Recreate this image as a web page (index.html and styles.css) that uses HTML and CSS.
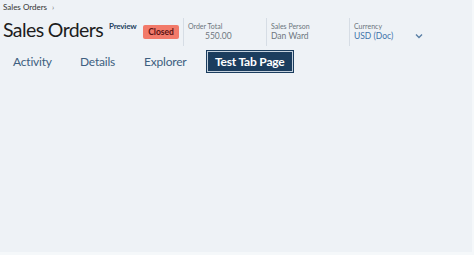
FILE: index.html
```html
<!DOCTYPE html>
<html>
<head>
<meta charset="utf-8">
<link rel="stylesheet" href="styles.css">
</head>
<body>
<div class="page">
  <div class="crumbs">Sales Orders <span class="sep">›</span></div>
  <div class="header">
    <h1 class="title">Sales Orders</h1>
    <span class="preview">Preview</span>
    <span class="badge">Closed</span>
    <div class="field">
      <div class="label">Order Total</div>
      <div class="value num">550.00</div>
    </div>
    <div class="field">
      <div class="label">Sales Person</div>
      <div class="value">Dan Ward</div>
    </div>
    <div class="field last">
      <div class="label">Currency</div>
      <div class="value link">USD (Doc)</div>
    </div>
    <svg class="chev" width="8" height="6" viewBox="0 0 8 6"><path d="M1 1.5 L4 4.5 L7 1.5" fill="none" stroke="#5a7fa5" stroke-width="1.4"/></svg>
  </div>
  <div class="tabs">
    <span class="tab t1">Activity</span>
    <span class="tab t2">Details</span>
    <span class="tab t3">Explorer</span>
    <span class="tab active">Test Tab Page</span>
  </div>
</div>
</body>
</html>
```
FILE: styles.css
```css
html, body { margin: 0; padding: 0; }
body {
  background: #f5f8fa;
  font-family: "Lato", "Noto Sans", sans-serif;
  width: 474px;
  height: 255px;
  overflow: hidden;
}
.page {
  width: 472px;
  height: 252px;
  background: #eef2f6;
  box-sizing: border-box;
  padding: 1px 0 0 3px;
}
.crumbs {
  font-size: 8px;
  color: #333;
  height: 12px;
  line-height: 12px;
}
.sep { margin-left: 3px; color: #777; }
.header {
  display: flex;
  align-items: flex-start;
  height: 30px;
  margin-top: 4px;
}
.title {
  margin: 0;
  width: 106px;
  flex: none;
  font-weight: 400;
  font-size: 19.5px;
  letter-spacing: -0.6px;
  line-height: 26px;
  color: #1d1d1d;
  white-space: nowrap;
}
.preview {
  width: 34px;
  flex: none;
  font-size: 8px;
  font-weight: 700;
  letter-spacing: -0.2px;
  color: #23425f;
  margin-top: 4px;
}
.badge {
  flex: none;
  width: 36px;
  box-sizing: border-box;
  text-align: center;
  margin-top: 8px;
  background: #f27a6a;
  color: #5b1212;
  font-size: 8.5px;
  font-weight: 700;
  padding: 2px 0;
  border-radius: 2px;
  line-height: 10px;
}
.field {
  flex: none;
  margin-left: 4px;
  border-left: 1px solid #d6dde5;
  padding-left: 4px;
  width: 74px;
  height: 28px;
  margin-top: 1px;
}
.label { font-size: 7px; color: #6b747c; line-height: 10px; margin-top: 3px; }
.value { font-size: 8.5px; color: #6e777f; line-height: 11px; }
.num { padding-left: 17px; }
.link { color: #3e74ab; }
.chev { margin: 16px 0 0 -13px; }
.tabs {
  display: flex;
  align-items: center;
  margin-top: 2px;
  height: 24px;
}
.tab {
  font-size: 12px;
  letter-spacing: -0.2px;
  color: #3d5f80;
}
.t1 { margin-left: 10px; width: 67px; }
.t2 { width: 64px; }
.t3 { width: 62px; }
.active {
  background: #1b3d5e;
  color: #fff;
  font-weight: 700;
  font-size: 12px;
  letter-spacing: -0.2px;
  padding: 3px 8px;
  outline: 1px solid #c5d2de;
  outline-offset: -2px;
  border: 1px solid #1b3d5e;
}
```
